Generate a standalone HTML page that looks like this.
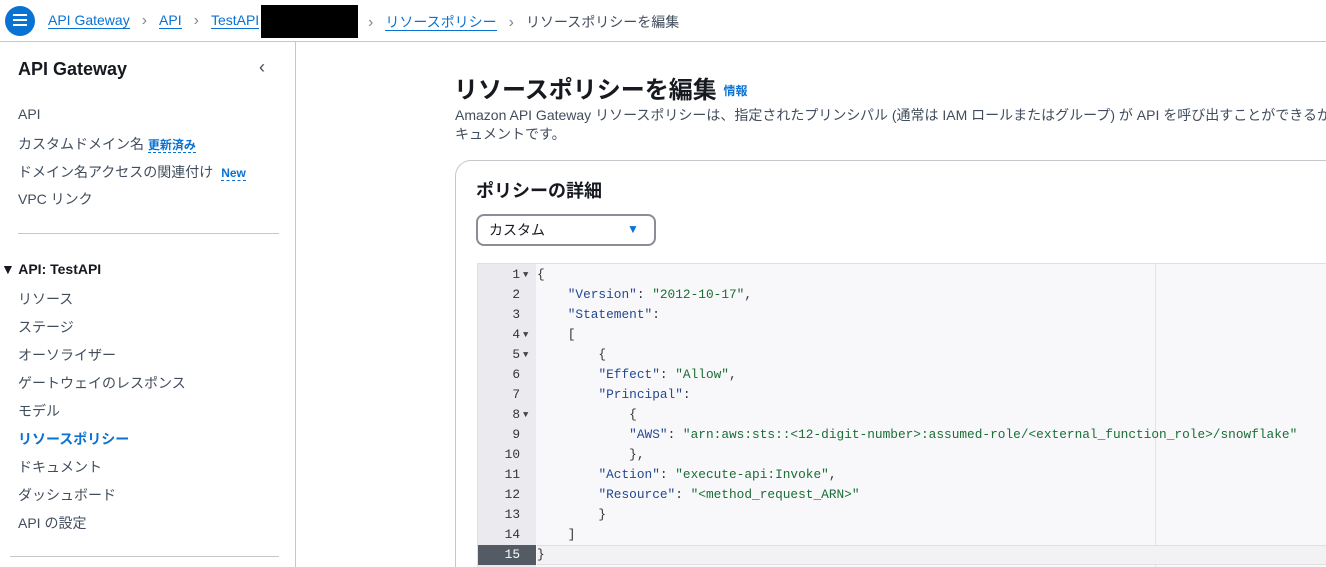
<!DOCTYPE html><html><head><meta charset="utf-8"><style>
*{margin:0;padding:0;box-sizing:border-box}
html,body{width:1326px;height:567px;overflow:hidden}
body{background:#fff;font-family:"Liberation Sans","Noto Sans CJK JP",sans-serif;color:#16191f;position:relative;font-size:14px}
.a{position:absolute;white-space:nowrap}
.lnk{color:#0972d3;border-bottom:1px solid #0972d3}
.sep{color:#7d8998;margin:0 12px;font-size:16px}
.nav{left:18px;font-size:14px;color:#414d5c}
.code{position:absolute;left:477px;top:263px;width:849px;height:304px;background:#f8f8fa;border-top:1px solid #e0e0e3;border-left:1px solid #e0e0e3;font-family:"Liberation Mono",monospace;font-size:12.8px;overflow:hidden}
.gut{position:absolute;left:0;top:0;width:58px;height:304px;background:#ebebef}
.ln{position:absolute;height:20px;line-height:20px}
.num{left:0;width:42px;text-align:right;color:#333}
.tx{left:59px;color:#333;white-space:pre}
.k{color:#24488f}.s{color:#1a6e35}
.tri{position:absolute;left:45px;font-size:9px;color:#444}
</style></head><body>
<div class="a" style="left:0;top:41px;width:1326px;border-top:1px solid #c6c6cd"></div>
<div class="a" style="left:295px;top:41px;height:526px;border-left:1px solid #c6c6cd"></div>
<div class="a" style="left:5px;top:6px;width:30px;height:30px;border-radius:50%;background:#0972d3"></div>
<div class="a" style="left:13px;top:14px;width:14px;height:2px;background:#fff;box-shadow:0 5px 0 #fff,0 10px 0 #fff"></div>
<div class="a" style="left:48px;top:12px;font-size:14px"><span class="lnk">API Gateway</span><span class="sep">›</span><span class="lnk">API</span><span class="sep">›</span><span class="lnk">TestAPI</span></div>
<div class="a" style="left:261px;top:5px;width:97px;height:33px;background:#000"></div>
<div class="a" style="left:356px;top:12px;font-size:14px"><span class="sep">›</span><span class="lnk">リソースポリシー</span><span class="sep">›</span><span style="color:#414d5c">リソースポリシーを編集</span></div>

<div class="a" style="left:18px;top:59px;font-size:18px;font-weight:bold">API Gateway</div>
<div class="a" style="left:259px;top:57px;font-size:18px;color:#414d5c">‹</div>
<div class="a nav" style="top:106px">API</div>
<div class="a nav" style="top:134px">カスタムドメイン名 <span style="color:#0972d3;font-size:12px;font-weight:bold;border-bottom:1px dashed #0972d3">更新済み</span></div>
<div class="a nav" style="top:162px">ドメイン名アクセスの関連付け <span style="color:#0972d3;font-size:12px;font-weight:bold;border-bottom:1px dashed #0972d3;margin-left:4px">New</span></div>
<div class="a nav" style="top:189px">VPC リンク</div>
<div class="a" style="left:18px;top:233px;width:261px;border-top:1px solid #c6c6cd"></div>
<div class="a" style="left:1px;top:261px;font-size:14px;font-weight:bold">▼ API: TestAPI</div>
<div class="a nav" style="top:289px">リソース</div>
<div class="a nav" style="top:317px">ステージ</div>
<div class="a nav" style="top:345px">オーソライザー</div>
<div class="a nav" style="top:373px">ゲートウェイのレスポンス</div>
<div class="a nav" style="top:401px">モデル</div>
<div class="a nav" style="top:429px;color:#0972d3;font-weight:bold">リソースポリシー</div>
<div class="a nav" style="top:457px">ドキュメント</div>
<div class="a nav" style="top:485px">ダッシュボード</div>
<div class="a nav" style="top:513px">API の設定</div>
<div class="a" style="left:10px;top:556px;width:269px;border-top:1px solid #c6c6cd"></div>

<div class="a" style="left:454px;top:70px;font-size:24px;font-weight:bold">リソースポリシーを編集 <span style="font-size:12px;color:#0972d3;vertical-align:3px">情報</span></div>
<div class="a" style="left:455px;top:106px;width:871px;overflow:hidden;font-size:14px;color:#414d5c;line-height:19px">Amazon API Gateway リソースポリシーは、指定されたプリンシパル (通常は IAM ロールまたはグループ) が API を呼び出すことができるか<br>キュメントです。</div>
<div class="a" style="left:455px;top:160px;width:871px;height:407px;border:1px solid #c6c6cd;border-right:none;border-bottom:none;border-radius:16px 0 0 0;background:#fff"></div>
<div class="a" style="left:476px;top:177px;font-size:18px;font-weight:bold">ポリシーの詳細</div>
<div class="a" style="left:476px;top:214px;width:180px;height:32px;border:2px solid #8c8c94;border-radius:8px"></div>
<div class="a" style="left:489px;top:220px;font-size:14px">カスタム</div>
<div class="a" style="left:627px;top:222px;font-size:12px;color:#0972d3">▼</div>

<div class="code">
<div class="gut"></div>
<div class="a" style="left:677px;top:0;height:304px;border-left:1px solid #e4e4e8"></div>
<div class="ln" style="left:0;top:281px;width:58px;background:#545b64"></div>
<div class="ln" style="left:59px;top:281px;width:800px;border-top:1px solid #e0e0e3;border-bottom:1px solid #e0e0e3;background:#f2f2f4"></div>
<div class="ln num" style="top:1px">1</div><div class="tri" style="top:6px">▼</div><div class="ln tx" style="top:1px">{</div>
<div class="ln num" style="top:21px">2</div><div class="ln tx" style="top:21px">    <span class="k">"Version"</span>: <span class="s">"2012-10-17"</span>,</div>
<div class="ln num" style="top:41px">3</div><div class="ln tx" style="top:41px">    <span class="k">"Statement"</span>:</div>
<div class="ln num" style="top:61px">4</div><div class="tri" style="top:66px">▼</div><div class="ln tx" style="top:61px">    [</div>
<div class="ln num" style="top:81px">5</div><div class="tri" style="top:86px">▼</div><div class="ln tx" style="top:81px">        {</div>
<div class="ln num" style="top:101px">6</div><div class="ln tx" style="top:101px">        <span class="k">"Effect"</span>: <span class="s">"Allow"</span>,</div>
<div class="ln num" style="top:121px">7</div><div class="ln tx" style="top:121px">        <span class="k">"Principal"</span>:</div>
<div class="ln num" style="top:141px">8</div><div class="tri" style="top:146px">▼</div><div class="ln tx" style="top:141px">            {</div>
<div class="ln num" style="top:161px">9</div><div class="ln tx" style="top:161px">            <span class="k">"AWS"</span>: <span class="s">"arn:aws:sts::&lt;12-digit-number&gt;:assumed-role/&lt;external_function_role&gt;/snowflake"</span></div>
<div class="ln num" style="top:181px">10</div><div class="ln tx" style="top:181px">            },</div>
<div class="ln num" style="top:201px">11</div><div class="ln tx" style="top:201px">        <span class="k">"Action"</span>: <span class="s">"execute-api:Invoke"</span>,</div>
<div class="ln num" style="top:221px">12</div><div class="ln tx" style="top:221px">        <span class="k">"Resource"</span>: <span class="s">"&lt;method_request_ARN&gt;"</span></div>
<div class="ln num" style="top:241px">13</div><div class="ln tx" style="top:241px">        }</div>
<div class="ln num" style="top:261px">14</div><div class="ln tx" style="top:261px">    ]</div>
<div class="ln num" style="top:281px;color:#fff">15</div><div class="ln tx" style="top:281px">}</div>
</div>
</body></html>
